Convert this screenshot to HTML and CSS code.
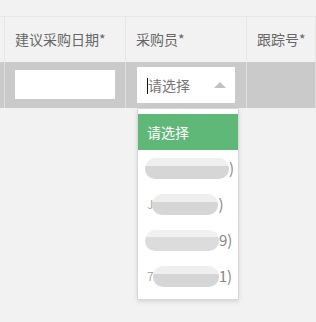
FILE: index.html
```html
<!DOCTYPE html>
<html lang="zh-CN">
<head>
    <meta charset="UTF-8">
    <title>采购明细</title>
    <link rel="stylesheet" href="styles.css">
</head>
<body>
    <div class="toolbar"></div>
    <div class="row head">
        <div class="cell"></div>
        <div class="cell">建议采购日期*</div>
        <div class="cell">采购员*</div>
        <div class="cell">跟踪号*</div>
    </div>
    <div class="row data">
        <div class="cell"></div>
        <div class="cell date-cell"><div class="input"></div></div>
        <div class="cell select-cell">
            <div class="select">
                <span class="caret"></span>请选择
                <i class="edge"></i>
                <dl class="options">
                    <dd class="active">请选择</dd>
                    <dd><span class="blur w84"></span><span class="tail">)</span></dd>
                    <dd><span class="lead">J</span><span class="blur w66"></span><span class="tail">)</span></dd>
                    <dd><span class="blur w74 light"></span><span class="tail">9)</span></dd>
                    <dd><span class="lead">7</span><span class="blur w66"></span><span class="tail">1)</span></dd>
                </dl>
            </div>
        </div>
        <div class="cell"></div>
    </div>
</body>
</html>
```

FILE: styles.css
```css
* {
    margin: 0;
    padding: 0;
    box-sizing: border-box;
}

body {
    background: #f2f2f2;
    font-family: "Noto Sans CJK SC", "Liberation Sans", sans-serif;
    font-size: 14px;
    color: #666;
    width: 316px;
    height: 322px;
    overflow: hidden;
}

.toolbar {
    height: 17px;
    border-bottom: 1px solid #e6e6e6;
}

.row {
    display: grid;
    grid-template-columns: 5px 121px 121px 1fr;
}

.cell {
    border-right: 1px solid #e6e6e6;
    padding: 0 10px;
}

.cell:first-child {
    padding: 0;
}

.head {
    height: 45px;
}

.head .cell {
    line-height: 45px;
    white-space: nowrap;
    overflow: hidden;
}

.data {
    height: 46px;
    background: #cacaca;
}

.data .cell {
    border-right-color: #dedede;
}

.date-cell {
    padding-top: 8px;
}

.input {
    width: 100px;
    height: 29px;
    background: #fff;
}

.select-cell {
    padding: 5px 0 0 11px;
}

.select {
    position: relative;
    width: 98px;
    height: 36px;
    background: #fff;
    padding-left: 10px;
    line-height: 36px;
    color: #757575;
}

.caret {
    display: inline-block;
    width: 1px;
    height: 16px;
    background: #111;
    vertical-align: -3px;
}

.edge {
    position: absolute;
    right: 9px;
    top: 15px;
    width: 0;
    height: 0;
    border: 6px solid transparent;
    border-top: none;
    border-bottom: 6px solid #c2c2c2;
}

.options {
    position: absolute;
    top: 41px;
    left: 0;
    width: 102px;
    padding: 5px 0;
    background: #fff;
    border: 1px solid #d9d9d9;
    border-radius: 2px;
    box-shadow: 0 2px 4px rgba(0, 0, 0, 0.12);
    z-index: 10;
}

.options dd {
    height: 36px;
    padding-left: 9px;
    display: flex;
    align-items: center;
    color: #777;
    white-space: nowrap;
}

.options dd.active {
    background: #5fb878;
    color: #fff;
}

.blur {
    display: inline-block;
    height: 21px;
    border-radius: 10px;
    background: linear-gradient(#efefef 0 40%, #d6d6d6 40%);
    filter: blur(0.6px);
    margin-left: -2px;
}

.blur.light {
    background: linear-gradient(#f1f1f1 0 35%, #dcdcdc 35%);
}

.lead {
    color: #aaa;
    font-size: 12px;
    margin-right: 1px;
}

.tail {
    color: #888;
    font-size: 15px;
}

.w84 { width: 84px; }
.w74 { width: 74px; }
.w66 { width: 66px; }
```
